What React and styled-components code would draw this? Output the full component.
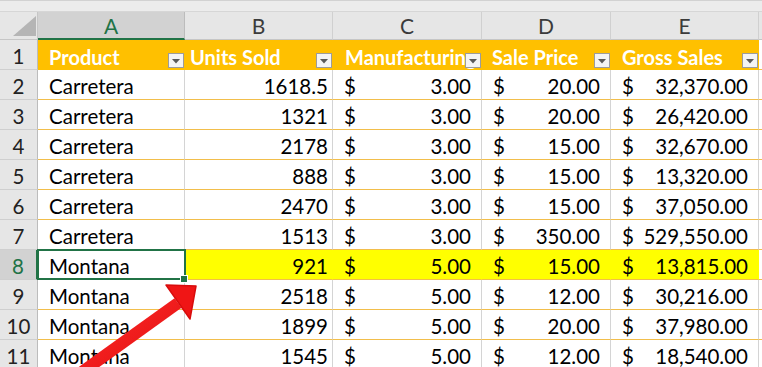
import React from 'react';
import styled, { createGlobalStyle, css } from 'styled-components';

const Global = createGlobalStyle`
  html, body { margin: 0; padding: 0; background: #ffffff; }
  body { overflow: hidden; }
  * { box-sizing: border-box; }
`;

const FONT = `'Lato', 'Liberation Sans', sans-serif`;
const COLS = '38px 147px 148px 149px 129px 148px 1fr';

const Page = styled.div`
  position: relative;
  width: 762px;
  height: 367px;
  overflow: hidden;
  background: #ffffff;
  font-family: ${FONT};
`;

const TopStrip = styled.div`
  height: 12px;
  background: #ececec;
  border-top: 1px solid #d2d2d2;
  border-bottom: 1px solid #d6d6d6;
`;

const Sheet = styled.div`
  display: grid;
  grid-template-columns: ${COLS};
  grid-template-rows: 28px repeat(11, 30px);
`;

const Corner = styled.div`
  position: relative;
  background: #e6e6e6;
  border-right: 1px solid #c6c6c6;
  border-bottom: 1px solid #c6c6c6;
`;

const CornerMark = styled.svg`
  position: absolute;
  left: 13px;
  top: 4px;
`;

const ColHeader = styled.div`
  display: flex;
  align-items: center;
  justify-content: center;
  font-size: 21px;
  color: #3b3b3b;
  background: #e6e6e6;
  border-right: 1px solid #d0d0d0;
  border-bottom: 1px solid #c6c6c6;
  ${(p) =>
    p.$active &&
    css`
      background: #d2d2d2;
      color: #217346;
      border-bottom: 2px solid #217346;
      border-right-color: #bcbcbc;
    `}
`;

const RowHeader = styled.div`
  display: flex;
  align-items: center;
  justify-content: center;
  padding-top: 3px;
  font-size: 20.5px;
  color: #222;
  background: #e6e6e6;
  border-right: 1px solid #bcbcbc;
  border-bottom: 1px solid #cfcfcf;
  ${(p) =>
    p.$active &&
    css`
      background: #d2d2d2;
      color: #217346;
      border-right: 2px solid #217346;
    `}
`;

const HeadCell = styled.div`
  position: relative;
  display: flex;
  align-items: center;
  padding: 3px 0 0 ${(p) => p.$pad}px;
  background: #ffc000;
  color: #ffffff;
  font-weight: 700;
  font-size: 20px;
  white-space: nowrap;
  overflow: hidden;
`;

const FilterButton = styled.span`
  position: absolute;
  right: 1px;
  bottom: 2px;
  width: 16px;
  height: 15px;
  background: #f4f4f4;
  border: 1px solid #9c9c9c;
  display: flex;
  align-items: center;
  justify-content: center;
  padding-top: 2px;
`;

const Cell = styled.div`
  position: relative;
  display: flex;
  align-items: center;
  justify-content: ${(p) => (p.$align === 'right' ? 'flex-end' : 'flex-start')};
  padding: 3px ${(p) => (p.$align === 'right' ? 4 : 0)}px 0
    ${(p) => (p.$align === 'right' ? 0 : 11)}px;
  font-size: 20.5px;
  color: #000;
  white-space: nowrap;
  background: ${(p) => (p.$hl ? '#ffff00' : '#ffffff')};
  border-right: 1px solid ${(p) => (p.$hl ? '#ffff00' : '#d4d4d4')};
  border-bottom: 1px solid #f2be4b;
  ${(p) =>
    p.$selected &&
    css`
      &::after {
        content: '';
        position: absolute;
        left: -1px;
        top: -1px;
        right: -2px;
        bottom: -1px;
        border: 2px solid #217346;
        z-index: 2;
      }
      &::before {
        content: '';
        position: absolute;
        right: -4px;
        bottom: -4px;
        width: 6px;
        height: 6px;
        background: #217346;
        border: 1px solid #ffffff;
        z-index: 3;
      }
    `}
`;

const MoneyCell = styled(Cell)`
  justify-content: space-between;
  padding-left: 11px;
  padding-right: 10px;
`;

const Overlay = styled.svg`
  position: absolute;
  left: 0;
  top: 0;
  pointer-events: none;
  z-index: 5;
`;

const rows = [
  ['Carretera', '1618.5', '3.00', '20.00', '32,370.00'],
  ['Carretera', '1321', '3.00', '20.00', '26,420.00'],
  ['Carretera', '2178', '3.00', '15.00', '32,670.00'],
  ['Carretera', '888', '3.00', '15.00', '13,320.00'],
  ['Carretera', '2470', '3.00', '15.00', '37,050.00'],
  ['Carretera', '1513', '3.00', '350.00', '529,550.00'],
  ['Montana', '921', '5.00', '15.00', '13,815.00'],
  ['Montana', '2518', '5.00', '12.00', '30,216.00'],
  ['Montana', '1899', '5.00', '20.00', '37,980.00'],
  ['Montana', '1545', '5.00', '12.00', '18,540.00'],
];

const headers = [
  ['Product', 11],
  ['Units Sold', 5],
  ['Manufacturing', 12],
  ['Sale Price', 10],
  ['Gross Sales', 11],
];

const Filter = () => (
  <FilterButton>
    <svg width="8" height="5" viewBox="0 0 8 5">
      <path d="M0 0 H8 L4 4.5 Z" fill="#5a5a5a" />
    </svg>
  </FilterButton>
);

export default function App() {
  return (
    <Page>
      <Global />
      <TopStrip />
      <Sheet>
        <Corner>
          <CornerMark width="23" height="20" viewBox="0 0 23 20">
            <path d="M0 20 H23 V0 Z" fill="#b5b5b5" />
          </CornerMark>
        </Corner>
        {['A', 'B', 'C', 'D', 'E'].map((l, i) => (
          <ColHeader key={l} $active={i === 0}>
            {l}
          </ColHeader>
        ))}
        <ColHeader />

        <RowHeader>1</RowHeader>
        {headers.map(([h, pad]) => (
          <HeadCell key={h} $pad={pad}>
            {h}
            <Filter />
          </HeadCell>
        ))}
        <Cell />

        {rows.map((r, idx) => {
          const n = idx + 2;
          const hl = n === 8;
          return (
            <React.Fragment key={n}>
              <RowHeader $active={hl}>{n}</RowHeader>
              <Cell $selected={hl}>{r[0]}</Cell>
              <Cell $align="right" $hl={hl}>
                {r[1]}
              </Cell>
              <MoneyCell $hl={hl}>
                <span>$</span>
                <span>{r[2]}</span>
              </MoneyCell>
              <MoneyCell $hl={hl}>
                <span>$</span>
                <span>{r[3]}</span>
              </MoneyCell>
              <MoneyCell $hl={hl}>
                <span>$</span>
                <span>{r[4]}</span>
              </MoneyCell>
              <Cell />
            </React.Fragment>
          );
        })}
      </Sheet>
      <Overlay width="762" height="367" viewBox="0 0 762 367">
        <defs>
          <linearGradient id="arrowFill" x1="0" y1="0" x2="1" y2="1">
            <stop offset="0" stopColor="#ff2a2a" />
            <stop offset="1" stopColor="#e00f0f" />
          </linearGradient>
        </defs>
        <line x1="82" y1="372" x2="178" y2="303" stroke="url(#arrowFill)" strokeWidth="12" />
        <polygon points="166,285 196,286 190,319" fill="#f01515" stroke="#d80c0c" strokeWidth="1.5" strokeLinejoin="round" />
      </Overlay>
    </Page>
  );
}
